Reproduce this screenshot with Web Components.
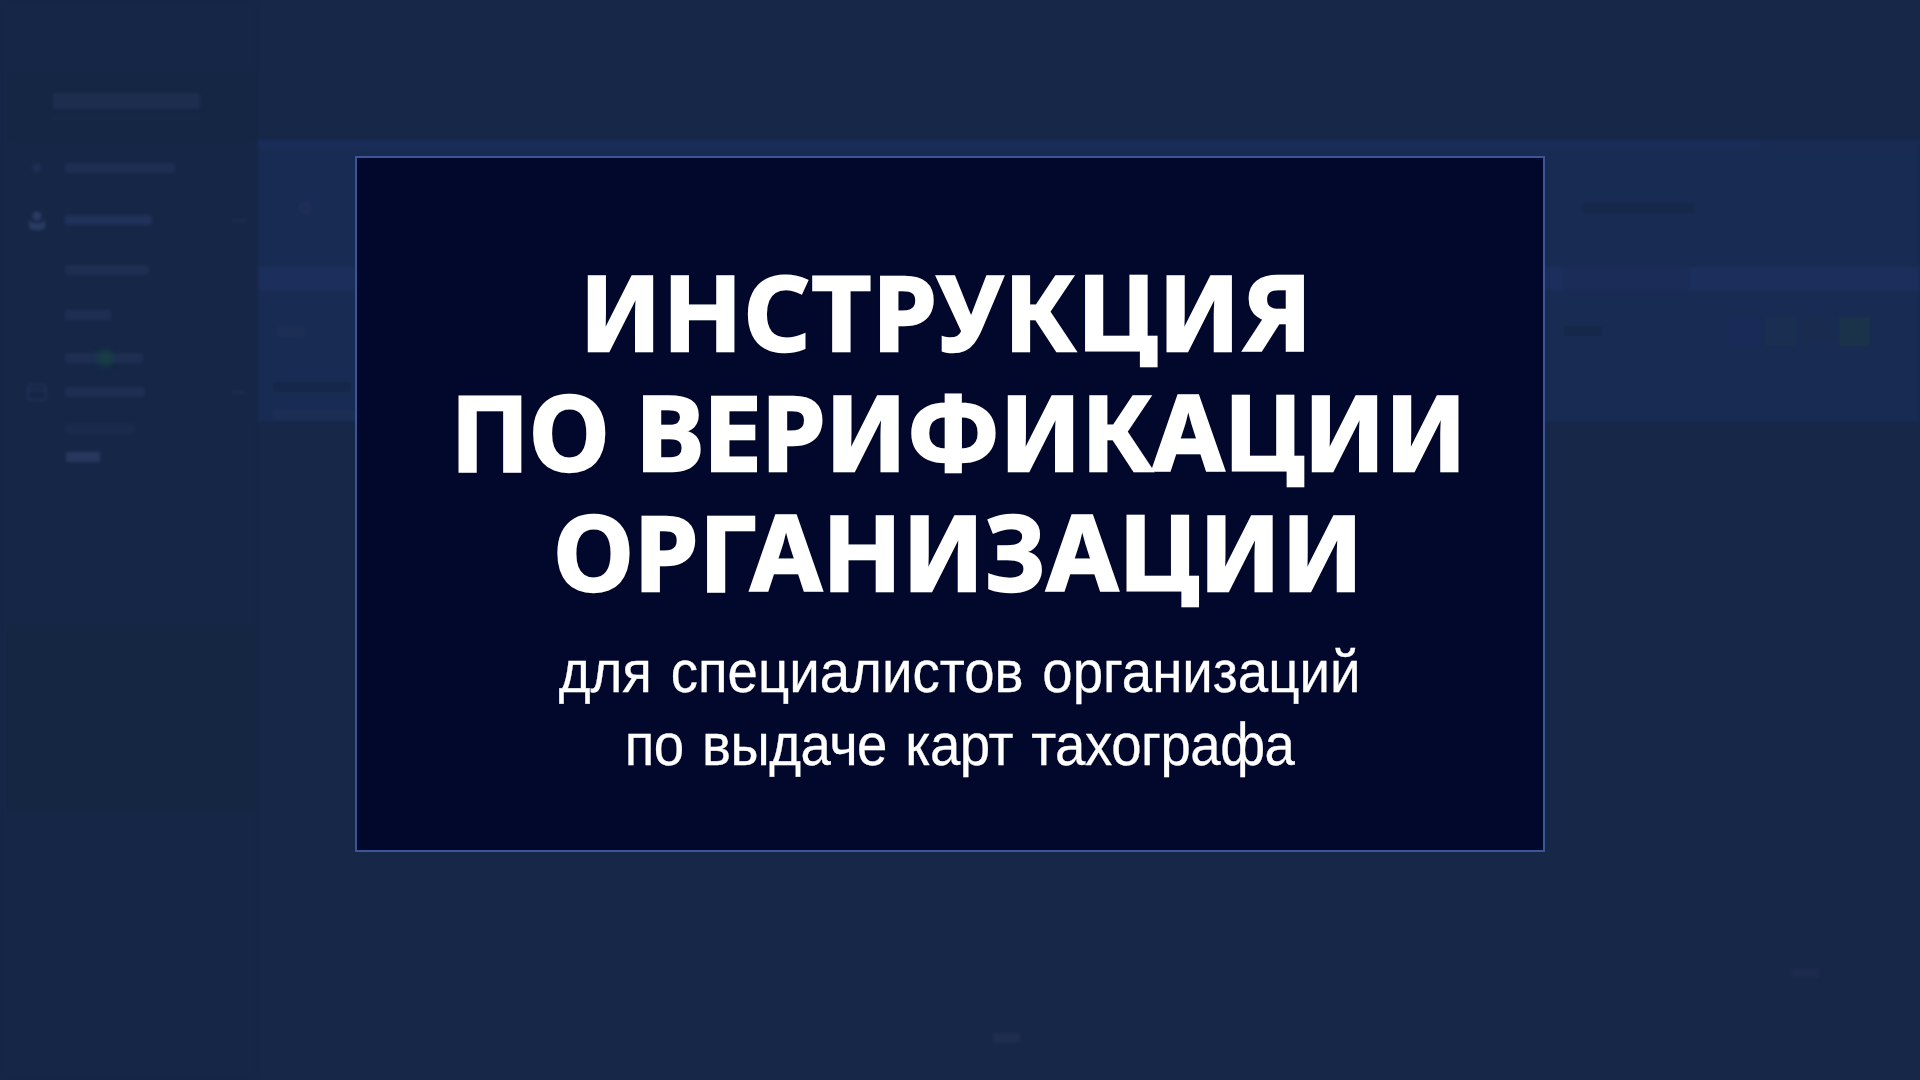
<!DOCTYPE html>
<html lang="ru">
<head>
<meta charset="utf-8">
<title>Инструкция по верификации организации</title>
<style>
html,body{margin:0;padding:0;background:#172748;overflow:hidden}
</style>
</head>
<body>
<slide-stage>
  <app-backdrop slot="backdrop"></app-backdrop>
  <title-card slot="card">
    <span slot="heading" class="first">ИНСТРУКЦИЯ</span>
    <span slot="heading">ПО ВЕРИФИКАЦИИ</span>
    <span slot="heading" class="third">ОРГАНИЗАЦИИ</span>
    <span slot="sub">для специалистов организаций</span>
    <span slot="sub" class="tight">по выдаче карт тахографа</span>
  </title-card>
</slide-stage>
<script>
function el(name, html){
  customElements.define(name, class extends HTMLElement{
    constructor(){super();this.attachShadow({mode:'open'}).innerHTML=html(this);}
  });
}
el('slide-stage',()=>`<style>
:host{display:block;position:relative;width:1920px;height:1080px;overflow:hidden;background:#172748}
.card{position:absolute;left:355px;top:156px}
</style><slot name="backdrop"></slot><div class="card"><slot name="card"></slot></div>`);

/* A blurred stroke standing in for illegible content of the dimmed app */
el('blur-bar',h=>{
  const w=h.getAttribute('w')||40,t=h.getAttribute('t')||9,c=h.getAttribute('c')||'#1d2e52';
  return `<style>:host{display:block;width:${w}px;height:${t}px;background:${c};border-radius:2px}</style>`;
});

el('nav-row',h=>{
  const H=h.getAttribute('h'),icon=h.getAttribute('icon')||'',w=h.getAttribute('w'),c=h.getAttribute('c')||'#1d2e52',chev=h.hasAttribute('chev');
  const icons={
    dot:'<circle cx="11" cy="11" r="5" fill="#1d2e52"/>',
    gear:'<g fill="#2a3b63"><circle cx="11" cy="7" r="4.5"/><path d="M3 11l4 3h8l4-3v8l-4 2H7l-4-2z"/></g>',
    box:'<rect x="2" y="4" width="18" height="15" rx="2" fill="none" stroke="#202f54" stroke-width="2"/><path d="M2 9h18" stroke="#202f54" stroke-width="2"/>'
  };
  return `<style>
  :host{display:flex;align-items:center;height:${H}px;padding-left:26px;box-sizing:border-box}
  .i{width:39px;flex:none}
  svg{display:block;width:22px;height:22px}
  .sp{flex:1}
  .ch{width:13px;height:3px;background:#1b2c4f;margin-right:13px}
  </style><div class="i">${icon?`<svg viewBox="0 0 22 22">${icons[icon]}</svg>`:''}</div><blur-bar w="${w}" t="10" c="${c}"></blur-bar><div class="sp"></div>${chev?'<div class="ch"></div>':''}`;
});

el('side-nav',()=>`<style>
:host{display:block;width:258px;height:1080px;background:#152646;box-sizing:border-box;padding:72px 0 0 0;flex:none}
.logo{height:70px;margin-left:8px;background:#152644;box-sizing:border-box;padding:21px 0 0 45px}
.logo blur-bar+blur-bar{margin-top:8px}
.green{position:absolute;left:97px;top:350px;width:16px;height:16px;border-radius:50%;background:#174045;filter:blur(3px)}
.chip{margin:-2px 0 0 66px;width:34px;height:10px;background:#27375d;border-radius:1px}
.panel{margin:164px 2px 0 8px;height:185px;background:#152642}
</style>
<div class="logo"><blur-bar w="147" t="16" c="#1c2d4e"></blur-bar><blur-bar w="147" t="2" c="#1a2b4b"></blur-bar></div>
<nav-row h="52" icon="dot" w="110"></nav-row>
<nav-row h="52" icon="gear" w="87" c="#20315a" chev></nav-row>
<nav-row h="48" w="84"></nav-row>
<nav-row h="42" w="46"></nav-row>
<nav-row h="44" w="78"></nav-row>
<nav-row h="24" icon="box" w="80" chev></nav-row>
<nav-row h="50" w="70" c="#192a4c"></nav-row>
<div class="chip"></div>
<div class="green"></div>
<div class="panel"></div>`);

el('app-main',()=>`<style>
:host{display:flex;flex-direction:column;flex:1;min-width:0;padding-top:140px;position:relative}
.tabs{height:8px;display:flex;background:#192b53}
.tabs b{display:block;width:1502px;background:#1a2d5a}
.panel{height:274px;background:#182b53;display:flex;flex-direction:column}
.head{height:119px;display:flex;align-items:center;padding-left:327px;gap:92px;box-sizing:border-box}
.filter{height:23px;background:#1c2e5b;display:flex;justify-content:flex-end}
.filter i{display:block;width:127px;height:23px;background:#1a2c57;margin-right:230px}
.row{height:82px;display:flex;align-items:center;padding:0 50px 0 19px}
.row .sp{flex:1}
.btns{display:flex;gap:6px}
.btns i{display:block;width:31px;height:29px}
.foot{padding:10px 0 0 15px;display:flex;flex-direction:column;gap:18px}
.bottom{position:absolute}
.c1{left:735px;top:1033px;width:27px;height:10px;background:#1f2d4e}
.c2{left:1533px;top:968px;width:28px;height:10px;background:#1c2b4e}
.i{position:absolute;left:40px;top:201px;width:14px;height:14px;background:#1d2d57;border-radius:50%}
</style>
<div class="tabs"><b></b></div>
<div class="panel">
  <div class="head">
    <blur-bar w="80" t="8" c="#152849"></blur-bar><blur-bar w="90" t="8" c="#152849"></blur-bar><blur-bar w="90" t="8" c="#152849"></blur-bar><blur-bar w="90" t="8" c="#152849"></blur-bar><blur-bar w="50" t="8" c="#152849"></blur-bar><blur-bar w="40" t="8" c="#152849"></blur-bar>
    <blur-bar w="112" t="10" c="#152849" style="margin-left:6px"></blur-bar>
  </div>
  <div class="filter"><i></i></div>
  <div class="row">
    <blur-bar w="28" t="11" c="#1c2e54"></blur-bar><div class="sp"></div>
    <blur-bar w="38" t="10" c="#152849" style="margin-right:126px"></blur-bar>
    <div class="btns"><i style="background:#192958"></i><i style="background:#192e50"></i><i style="background:#192c50"></i><i style="background:#1a3349"></i></div>
  </div>
  <div class="foot"><blur-bar w="78" t="10" c="#152849"></blur-bar><blur-bar w="100" t="10" c="#1c2e54"></blur-bar></div>
</div>
<div class="i"></div>
<div class="bottom c1"></div><div class="bottom c2"></div>`);

el('app-backdrop',()=>`<style>
:host{display:flex;width:1920px;height:1080px;filter:blur(1.8px);position:relative}
</style><side-nav></side-nav><app-main></app-main>`);

el('title-card',()=>`<style>
:host{display:flex;flex-direction:column;align-items:center;box-sizing:border-box;width:1190px;height:696px;background:#02082b;border:2px solid #3b5596;padding:93px 0 0 17px;color:#fff}
.h{display:flex;flex-direction:column;align-items:center;font:700 103.5px/120px "Noto Sans",sans-serif;letter-spacing:-.4px;-webkit-text-stroke:2.5px #fff;white-space:nowrap;text-shadow:0 1px 2px rgba(0,0,0,.5)}
.s{display:flex;flex-direction:column;align-items:center;margin-top:24px;margin-left:3px;font:400 60px/73px "Liberation Sans",sans-serif;word-spacing:4px;white-space:nowrap;transform:scaleX(.91);-webkit-text-stroke:.3px #fff}
::slotted(span){display:block}
::slotted(.first){padding-right:24px;letter-spacing:1.2px}
::slotted(.third){letter-spacing:.4px}
::slotted(.tight){letter-spacing:-.55px}
</style><div class="h"><slot name="heading"></slot></div><div class="s"><slot name="sub"></slot></div>`);
</script>
</body>
</html>
